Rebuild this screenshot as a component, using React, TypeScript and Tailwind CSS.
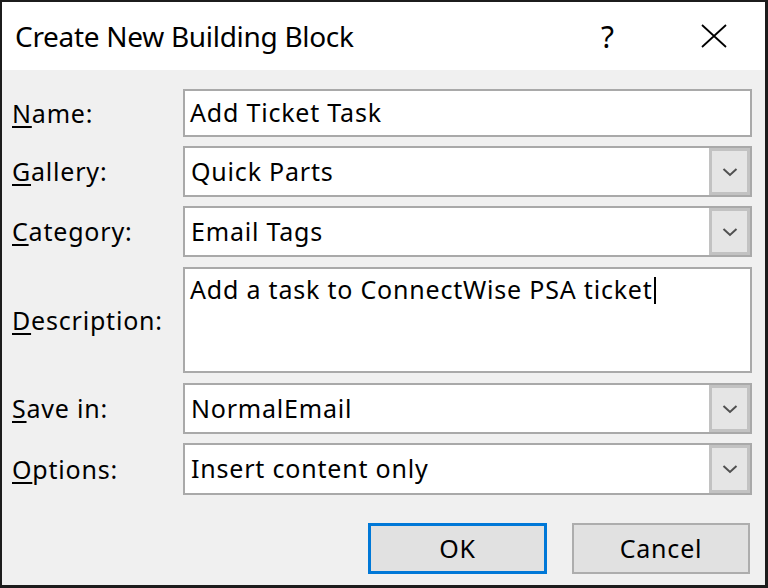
import React from "react";

const font = { fontFamily: '"Noto Sans", "Open Sans", sans-serif' };

function Label({ k, rest }: { k: string; rest: string }) {
  return (
    <div className="w-[171px] shrink-0 text-[25px] tracking-[0.8px] text-black leading-none" style={font}>
      <span className="underline underline-offset-[3px] decoration-[2px]">{k}</span>
      {rest}
    </div>
  );
}

function Chevron() {
  return (
    <svg width="16" height="10" viewBox="0 0 16 10">
      <path d="M1.5 2 L8 8 L14.5 2" fill="none" stroke="#505050" strokeWidth="2" />
    </svg>
  );
}

function Combo({ value }: { value: string }) {
  return (
    <div className="flex flex-1 h-full border-2 border-[#a9a9a9] bg-white">
      <div className="flex-1 flex items-center pl-[6px] text-[25px] tracking-[0.8px] text-black" style={font}>
        {value}
      </div>
      <div className="w-[41px] h-full border-[3px] border-[#c2c2c2] bg-[#e5e5e5] flex items-center justify-center">
        <Chevron />
      </div>
    </div>
  );
}

export default function App() {
  return (
    <div className="w-[768px] h-[588px] bg-[#1c1c1c] pt-[2px] pl-[2px] pr-[3px] pb-[3px]">
      <div className="w-full h-full flex flex-col bg-[#f0f0f0]">
        <div className="h-[68px] bg-white flex items-center shrink-0">
          <div className="pl-[13px] text-[28px] text-black flex-1 tracking-[-0.3px]" style={font}>
            Create New Building Block
          </div>
          <div className="text-[30px] text-black mr-[87px]" style={font}>?</div>
          <div className="mr-[38px] flex items-center">
            <svg width="26" height="24" viewBox="0 0 26 24">
              <path d="M1 1 L25 23 M25 1 L1 23" stroke="#000" strokeWidth="1.8" fill="none" />
            </svg>
          </div>
        </div>
        <div className="flex flex-col pl-[10px] pr-[13px] pt-[19px]">
          <div className="flex items-center h-[48px]">
            <Label k="N" rest="ame:" />
            <div className="flex-1 h-full border-2 border-[#a9a9a9] bg-white flex items-center pl-[5px] text-[25px] tracking-[0.8px] text-black" style={font}>
              Add Ticket Task
            </div>
          </div>
          <div className="flex items-center h-[51px] mt-[9px]">
            <Label k="G" rest="allery:" />
            <Combo value="Quick Parts" />
          </div>
          <div className="flex items-center h-[51px] mt-[9px]">
            <Label k="C" rest="ategory:" />
            <Combo value="Email Tags" />
          </div>
          <div className="flex items-center h-[106px] mt-[10px]">
            <Label k="D" rest="escription:" />
            <div className="flex-1 h-full border-2 border-[#a9a9a9] bg-white pl-[5px] pt-[5px] text-[25px] tracking-[0.8px] text-black leading-[30px]" style={font}>
              Add a task to ConnectWise PSA ticket
              <span className="inline-block w-[2px] h-[27px] bg-black align-[-5px] ml-[1px]" />
            </div>
          </div>
          <div className="flex items-center h-[51px] mt-[10px]">
            <Label k="S" rest="ave in:" />
            <Combo value="NormalEmail" />
          </div>
          <div className="flex items-center h-[52px] mt-[9px]">
            <Label k="O" rest="ptions:" />
            <Combo value="Insert content only" />
          </div>
          <div className="flex justify-end mt-[28px] gap-[25px] pr-[2px]">
            <div className="w-[179px] h-[51px] border-[3px] border-[#0078d7] bg-[#e1e1e1] flex items-center justify-center text-[25px] tracking-[0.8px] text-black" style={font}>
              OK
            </div>
            <div className="w-[178px] h-[51px] border-2 border-[#adadad] bg-[#e1e1e1] flex items-center justify-center text-[25px] tracking-[0.8px] text-black" style={font}>
              Cancel
            </div>
          </div>
        </div>
      </div>
    </div>
  );
}
